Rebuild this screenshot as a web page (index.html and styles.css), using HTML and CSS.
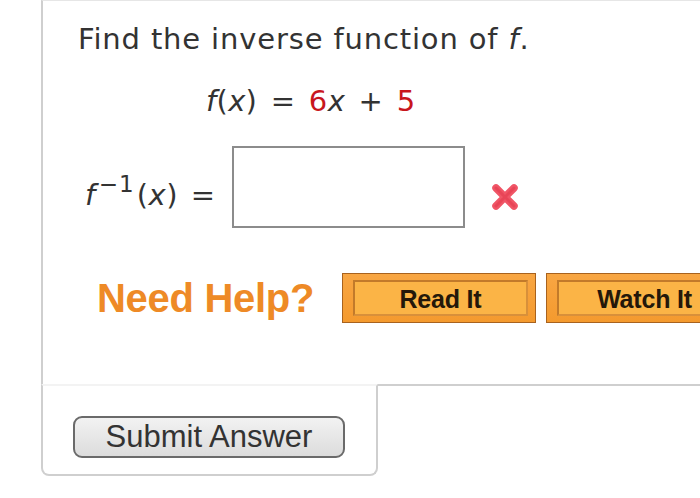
FILE: index.html
```html
<!DOCTYPE html>
<html>
<head>
<meta charset="utf-8">
<link rel="stylesheet" href="styles.css">
</head>
<body>
<div class="page">
  <div class="panel">
    <div class="question">Find the inverse function of <i>f</i>.</div>
    <div class="formula"><i>f</i>(<i>x</i>) = <span class="red">6</span><i>x</i> + <span class="red">5</span></div>
    <div class="answer-row">
      <div class="label"><i>f</i><sup>&minus;1</sup>(<i>x</i>) <span class="eq">=</span></div>
      <div class="input"></div>
      <svg class="wrong" width="32" height="32" viewBox="0 0 32 32">
        <path d="M7 7 L25 25 M25 7 L7 25" stroke="#f05566" stroke-width="7.5" stroke-linecap="round" fill="none"/>
        <path d="M7 7 L25 25 M25 7 L7 25" stroke="#e23a4c" stroke-width="3" stroke-linecap="round" fill="none" opacity="0.6"/>
      </svg>
    </div>
    <div class="help-row">
      <div class="need-help">Need Help?</div>
      <div class="hbtn"><div class="hbtn-inner">Read It</div></div>
      <div class="hbtn"><div class="hbtn-inner">Watch It</div></div>
    </div>
  </div>
  <div class="submit-box">
    <div class="submit">Submit Answer</div>
  </div>
</div>
</body>
</html>
```
FILE: styles.css
```css
html, body {
  margin: 0;
  padding: 0;
  background: #fff;
  overflow: hidden;
  width: 700px;
  height: 498px;
}
.page {
  padding-left: 41px;
  width: 800px;
}
.panel {
  border-left: 2px solid #cfcfcf;
  border-top: 1px solid #e6e6e6;
  border-bottom: 2px solid #cfcfcf;
  box-sizing: border-box;
  height: 386px;
  padding-left: 35px;
  font-family: "DejaVu Sans", Verdana, sans-serif;
  color: #333;
}
.question {
  font-size: 29px;
  padding-top: 18px;
  line-height: 40px;
  letter-spacing: 0.85px;
}
.formula {
  font-size: 29px;
  line-height: 40px;
  margin-top: 22px;
  padding-left: 128px;
  word-spacing: 4px;
  letter-spacing: 0.3px;
}
.red { color: #c8161d; }
i { font-style: italic; }
.answer-row {
  display: flex;
  align-items: center;
  margin-top: 25px;
}
.label {
  font-size: 29px;
  line-height: 40px;
  padding-left: 7px;
  width: 147px;
  flex: none;
  margin-top: 16px;
  letter-spacing: 0.5px;
}
.label sup {
  font-size: 23px;
  vertical-align: 13px;
  line-height: 0;
  padding-left: 3px;
  padding-right: 2px;
  letter-spacing: 1px;
}
.eq { padding-left: 3px; }
.input {
  width: 229px;
  height: 78px;
  border: 2px solid #8c8c8c;
  background: #fff;
  flex: none;
}
.wrong {
  margin-left: 24px;
  margin-top: 20px;
  filter: blur(0.6px);
}
.help-row {
  display: flex;
  align-items: center;
  margin-top: 45px;
}
.need-help {
  font-family: "Liberation Sans", Arial, sans-serif;
  font-weight: bold;
  font-size: 40px;
  color: #ee8a26;
  padding-left: 19px;
  width: 245px;
  flex: none;
  letter-spacing: -0.3px;
  margin-top: 1px;
}
.hbtn {
  width: 194px;
  height: 50px;
  border: 1px solid #a8621e;
  background: linear-gradient(#f8a643, #f49a2e);
  padding: 6px 7px 6px 10px;
  box-sizing: border-box;
  margin-right: 10px;
  flex: none;
}
.hbtn-inner {
  height: 100%;
  box-sizing: border-box;
  border: 2px solid #c27a2a;
  border-right-color: #d8903a;
  border-bottom-color: #d8903a;
  background: #fbb446;
  font-family: "Liberation Sans", Arial, sans-serif;
  font-weight: bold;
  font-size: 25px;
  color: #24180a;
  display: flex;
  align-items: center;
  justify-content: center;
  letter-spacing: -0.2px;
  padding-top: 2px;
}
.submit-box {
  width: 337px;
  height: 92px;
  box-sizing: border-box;
  margin-top: -2px;
  border: 2px solid #cfcfcf;
  border-top: 2px solid #f3f3f3;
  border-radius: 0 0 8px 8px;
  padding: 30px 0 0 30px;
}
.submit {
  width: 272px;
  height: 42px;
  box-sizing: border-box;
  border: 2px solid #6a6a6a;
  border-radius: 9px;
  background: linear-gradient(#f2f2f2, #dcdcdc);
  font-family: "Liberation Sans", Arial, sans-serif;
  font-size: 31px;
  color: #333;
  display: flex;
  align-items: center;
  justify-content: center;
}
```
